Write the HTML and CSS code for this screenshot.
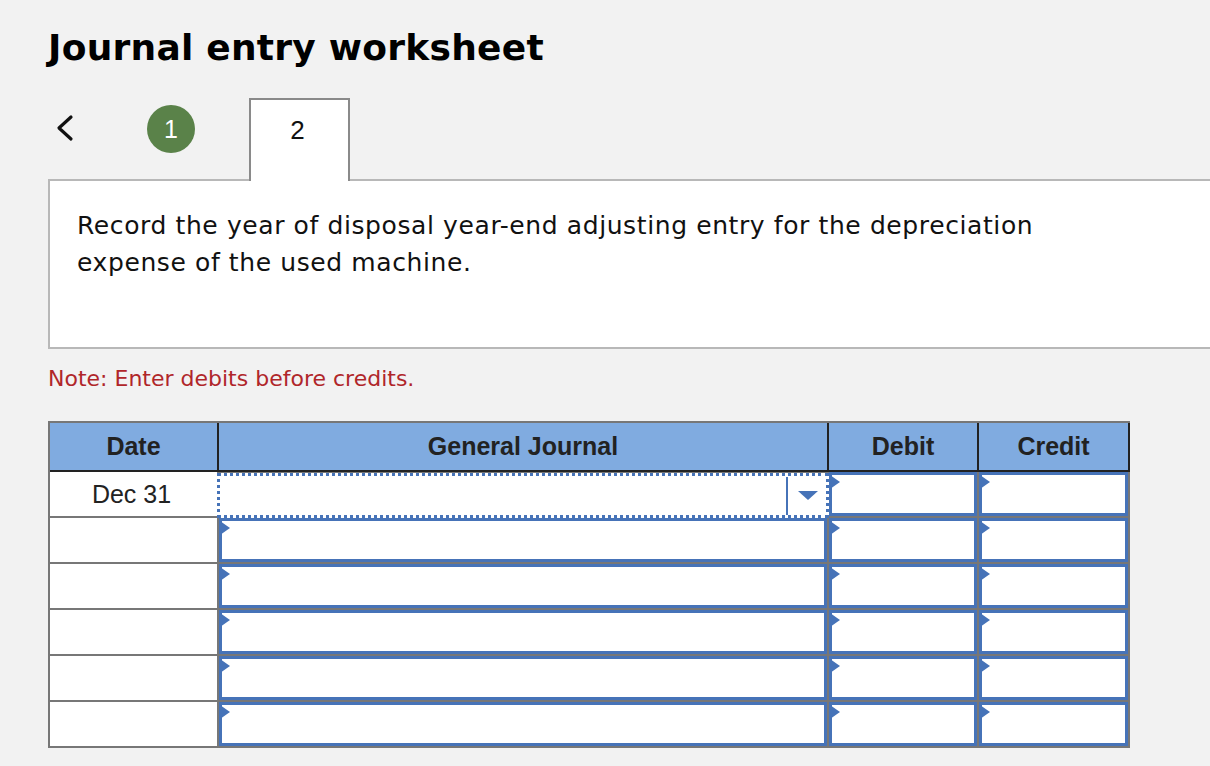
FILE: index.html
```html
<!DOCTYPE html>
<html lang="en">
<head>
<meta charset="utf-8">
<title>Journal entry worksheet</title>
<link rel="stylesheet" href="styles.css">
</head>
<body>
<div class="page">
  <h1 class="title">Journal entry worksheet</h1>
  <div class="steps">
    <svg class="back" width="20" height="28" viewBox="0 0 20 28"><polyline points="16,3 4,14 16,25" fill="none" stroke="#111" stroke-width="3.2" stroke-linecap="round" stroke-linejoin="round"/></svg>
    <div class="step-done">1</div>
    <div class="tab">2</div>
  </div>
  <div class="panel">
    <p class="prompt">Record the year of disposal year-end adjusting entry for the depreciation<br>expense of the used machine.</p>
  </div>
  <p class="note">Note: Enter debits before credits.</p>
  <div class="journal">
    <div class="jhead">
      <div class="hcell">Date</div>
      <div class="hcell">General Journal</div>
      <div class="hcell">Debit</div>
      <div class="hcell">Credit</div>
    </div>
    <div class="jbody">
      <div class="date">Dec 31</div>
      <div class="select"><span class="divider"></span><span class="arrow"></span></div>
      <div class="inp"></div>
      <div class="inp"></div>

      <div class="date"></div>
      <div class="inp"></div>
      <div class="inp"></div>
      <div class="inp"></div>

      <div class="date"></div>
      <div class="inp"></div>
      <div class="inp"></div>
      <div class="inp"></div>

      <div class="date"></div>
      <div class="inp"></div>
      <div class="inp"></div>
      <div class="inp"></div>

      <div class="date"></div>
      <div class="inp"></div>
      <div class="inp"></div>
      <div class="inp"></div>

      <div class="date"></div>
      <div class="inp"></div>
      <div class="inp"></div>
      <div class="inp"></div>
    </div>
  </div>
</div>
</body>
</html>
```

FILE: styles.css
```css
html, body {
  margin: 0;
  padding: 0;
  background: #f2f2f2;
  overflow: hidden;
}

.page {
  padding: 26px 0 0 48px;
  font-family: "DejaVu Sans", Verdana, sans-serif;
  color: #111;
}

.title {
  margin: 0;
  font-size: 36px;
  line-height: 44px;
  font-weight: bold;
  letter-spacing: 0.25px;
  color: #000;
}

.steps {
  display: flex;
  align-items: flex-start;
  margin-top: 28px;
}

.back {
  display: block;
  margin-left: 7px;
  margin-top: 16px;
}

.step-done {
  width: 48px;
  height: 48px;
  border-radius: 50%;
  background: #5a8249;
  color: #fff;
  margin-left: 72px;
  margin-top: 7px;
  display: flex;
  align-items: center;
  justify-content: center;
  font-family: "Liberation Sans", Arial, sans-serif;
  font-size: 25px;
}

.tab {
  position: relative;
  z-index: 1;
  box-sizing: border-box;
  width: 101px;
  height: 83px;
  margin-left: 54px;
  margin-bottom: -2px;
  background: #fff;
  border: 2px solid #8a8a8a;
  border-bottom: none;
  text-align: center;
  padding-top: 15px;
  padding-right: 4px;
  font-family: "Liberation Sans", Arial, sans-serif;
  font-size: 26px;
  line-height: 30px;
  color: #111;
}

.panel {
  box-sizing: border-box;
  height: 170px;
  margin-right: -20px;
  background: #fff;
  border: 2px solid #b8b8b8;
  padding: 26px 40px 0 27px;
}

.prompt {
  margin: 0;
  font-size: 25px;
  line-height: 37px;
  letter-spacing: 0.6px;
  white-space: nowrap;
}

.note {
  margin: 15px 0 0 0;
  font-size: 22px;
  line-height: 30px;
  color: #b0262a;
}

.journal {
  width: 1082px;
  margin-top: 27px;
  border-top: 2px solid #777;
  border-left: 2px solid #777;
  box-sizing: border-box;
  font-family: "Liberation Sans", Arial, sans-serif;
  font-size: 25px;
  color: #222;
}

.jhead {
  display: grid;
  grid-template-columns: 167px 608px 148px 149px;
  column-gap: 2px;
  background: #222;
  padding: 0 2px 2px 0;
}

.hcell {
  background: #80abe0;
  height: 47px;
  display: flex;
  align-items: center;
  justify-content: center;
  font-weight: bold;
}

.jbody {
  display: grid;
  grid-template-columns: 167px 608px 148px 149px;
  grid-auto-rows: 44px;
  gap: 2px;
  background: #777;
  padding: 0 2px 2px 0;
}

.date {
  background: #fff;
  display: flex;
  align-items: center;
  justify-content: center;
  padding-right: 4px;
}

.inp {
  position: relative;
  background: #fff;
  border: 3px solid #4673b8;
}

.inp::before {
  content: "";
  position: absolute;
  top: 0;
  left: -2px;
  border-left: 10px solid #4673b8;
  border-top: 7px solid transparent;
  border-bottom: 7px solid transparent;
}

.select {
  background: #fff;
  border: 3px dotted #4673b8;
  margin: 1px -2px -2px -2px;
  display: flex;
  align-items: center;
  justify-content: flex-end;
}

.divider {
  width: 2px;
  height: 38px;
  background: #4673b8;
}

.arrow {
  width: 0;
  height: 0;
  margin: 0 8px 0 10px;
  border-top: 9px solid #4673b8;
  border-left: 10px solid transparent;
  border-right: 10px solid transparent;
}
```
